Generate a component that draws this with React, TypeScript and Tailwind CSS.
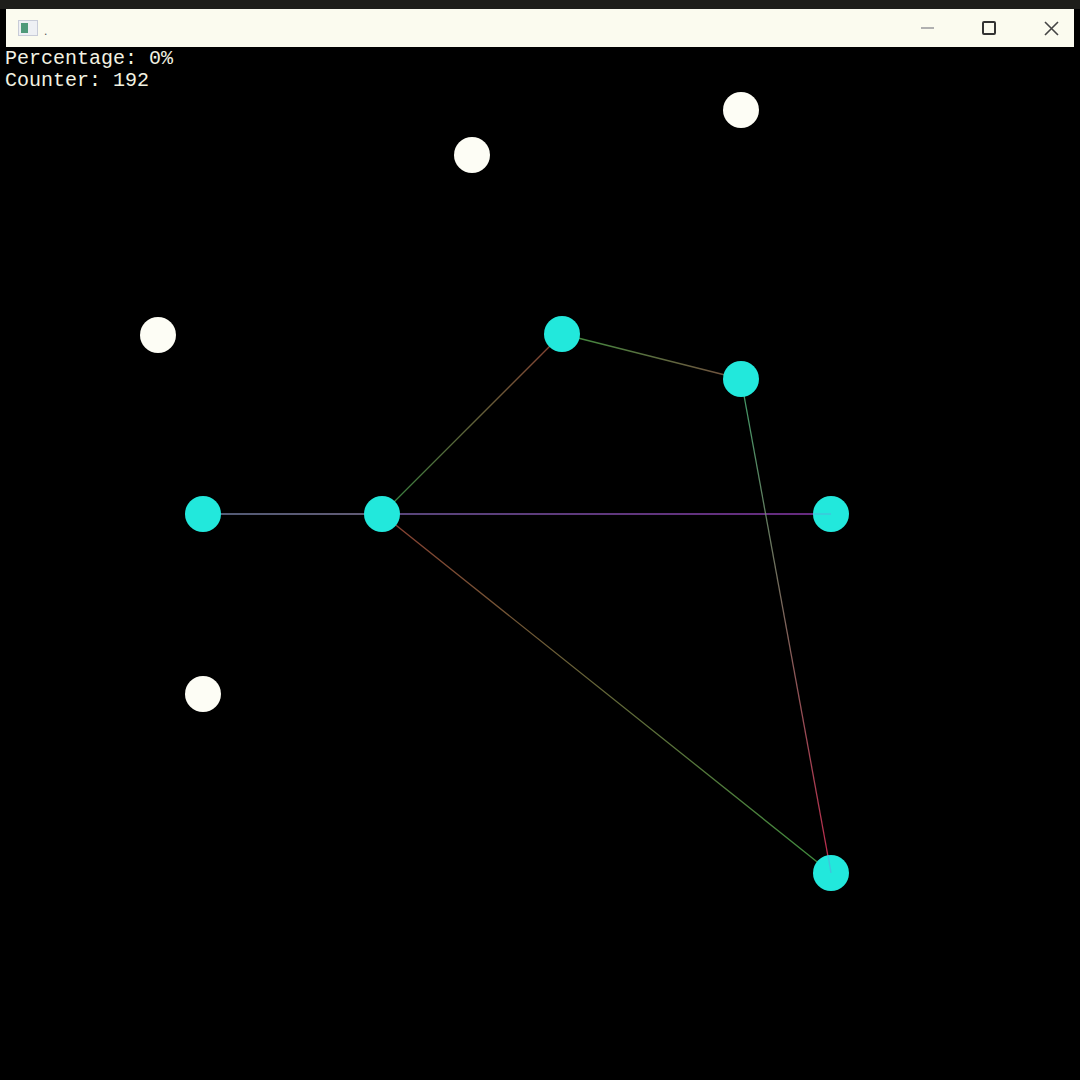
import React from 'react';

type Pt = { x: number; y: number };

const whiteNodes: Pt[] = [
  { x: 741, y: 110 },
  { x: 472, y: 155 },
  { x: 158, y: 335 },
  { x: 203, y: 694 },
];

const cyanNodes: Pt[] = [
  { x: 562, y: 334 },
  { x: 741, y: 379 },
  { x: 203, y: 514 },
  { x: 382, y: 514 },
  { x: 831, y: 514 },
  { x: 831, y: 873 },
];

// edges with gradient start/end colours
const edges = [
  { a: { x: 203, y: 514 }, b: { x: 382, y: 514 }, c1: '#7f8fb8', c2: '#9a8fb8' },
  { a: { x: 382, y: 514 }, b: { x: 831, y: 514 }, c1: '#8a6fc0', c2: '#a040c8' },
  { a: { x: 382, y: 514 }, b: { x: 562, y: 334 }, c1: '#3f9a4a', c2: '#a04a3a' },
  { a: { x: 562, y: 334 }, b: { x: 741, y: 379 }, c1: '#4aa64a', c2: '#8a5a4a' },
  { a: { x: 741, y: 379 }, b: { x: 831, y: 873 }, c1: '#4ab87a', c2: '#e0305a' },
  { a: { x: 382, y: 514 }, b: { x: 831, y: 873 }, c1: '#a04a3a', c2: '#4aa84a' },
];

function TitleBar() {
  return (
    <div className="mx-[6px] h-[38px] bg-[#fbfbef] flex items-center">
      <div className="ml-[12px] w-[20px] h-[16px] border border-[#c8ccd8] bg-[#eef0f4] flex items-center pl-[2px]">
        <div className="w-[7px] h-[10px] bg-[#4f9a7a]" />
      </div>
      <span className="ml-[6px] mt-[6px] text-[12px] leading-none text-[#555] font-['Liberation_Sans',sans-serif]">.</span>
      <div className="ml-auto flex items-center gap-[16px] h-full">
        <div className="w-[46px] h-full flex items-center justify-center">
          <div className="w-[13px] h-[2px] bg-[#b0b0b0]" />
        </div>
        <div className="w-[46px] h-full flex items-center justify-center">
          <div className="w-[14px] h-[14px] border-2 border-[#333] rounded-[2px]" />
        </div>
        <div className="w-[46px] h-full flex items-center justify-center">
          <svg width="15" height="15" viewBox="0 0 15 15">
            <path d="M1 1 L14 14 M14 1 L1 14" stroke="#444" strokeWidth="1.6" />
          </svg>
        </div>
      </div>
    </div>
  );
}

function Canvas() {
  return (
    <svg className="absolute inset-0" width="1080" height="1080" viewBox="0 0 1080 1080">
      <defs>
        {edges.map((e, i) => (
          <linearGradient
            key={i}
            id={`g${i}`}
            gradientUnits="userSpaceOnUse"
            x1={e.a.x}
            y1={e.a.y}
            x2={e.b.x}
            y2={e.b.y}
          >
            <stop offset="0" stopColor={e.c1} />
            <stop offset="1" stopColor={e.c2} />
          </linearGradient>
        ))}
      </defs>
      {edges.map((e, i) => (
        <line
          key={`e${i}`}
          x1={e.a.x}
          y1={e.a.y}
          x2={e.b.x}
          y2={e.b.y}
          stroke={`url(#g${i})`}
          strokeWidth="1.3"
          strokeOpacity="0.85"
        />
      ))}
      {whiteNodes.map((p, i) => (
        <circle key={`w${i}`} cx={p.x} cy={p.y} r="18" fill="#fdfdf5" />
      ))}
      {cyanNodes.map((p, i) => (
        <circle key={`c${i}`} cx={p.x} cy={p.y} r="18" fill="#22e8dc" />
      ))}
      {/* faint traces over the two right-hand nodes */}
      <line x1="813" y1="514" x2="831" y2="514" stroke="#5aa8e0" strokeWidth="1.3" strokeOpacity="0.6" />
      <line x1="828" y1="855" x2="831" y2="873" stroke="#5aa8e0" strokeWidth="1.3" strokeOpacity="0.6" />
    </svg>
  );
}

export default function App() {
  return (
    <div className="relative w-[1080px] h-[1080px] bg-black overflow-hidden">
      <Canvas />
      <div className="relative flex flex-col">
        <div className="h-[9px] bg-[#1e1e1a]" />
        <TitleBar />
        <div className="px-[5px] pt-[1px] text-[#f2f2e2] text-[20px] leading-[22px] font-['Liberation_Mono',monospace]">
          <div>Percentage: 0%</div>
          <div>Counter: 192</div>
        </div>
      </div>
    </div>
  );
}
